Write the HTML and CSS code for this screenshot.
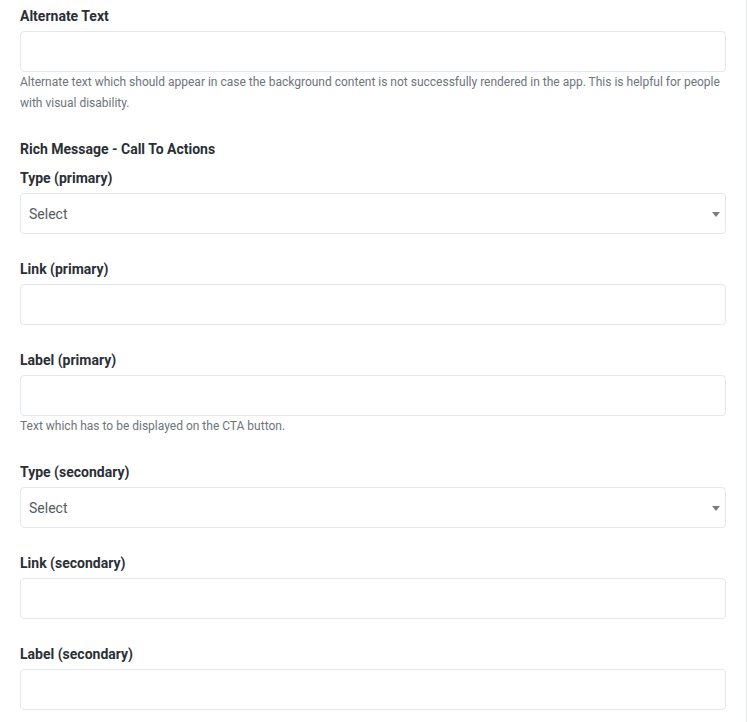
FILE: index.html
```html
<!DOCTYPE html>
<html lang="en">
<head>
<meta charset="utf-8">
<title>Rich Message</title>
<link rel="stylesheet" href="styles.css">
</head>
<body>
<div class="panel">
  <div class="group">
    <label class="label">Alternate Text</label>
    <div class="input"></div>
    <p class="help">Alternate text which should appear in case the background content is not successfully rendered in the app. This is helpful for people with visual disability.</p>
  </div>

  <h4 class="section">Rich Message - Call To Actions</h4>

  <div class="group">
    <label class="label">Type (primary)</label>
    <div class="input select"><span class="placeholder">Select</span><span class="caret"></span></div>
  </div>

  <div class="group">
    <label class="label">Link (primary)</label>
    <div class="input"></div>
  </div>

  <div class="group">
    <label class="label">Label (primary)</label>
    <div class="input"></div>
    <p class="help">Text which has to be displayed on the CTA button.</p>
  </div>

  <div class="group">
    <label class="label">Type (secondary)</label>
    <div class="input select"><span class="placeholder">Select</span><span class="caret"></span></div>
  </div>

  <div class="group">
    <label class="label">Link (secondary)</label>
    <div class="input"></div>
  </div>

  <div class="group">
    <label class="label">Label (secondary)</label>
    <div class="input"></div>
  </div>
</div>
</body>
</html>
```

FILE: styles.css
```css
html, body {
  margin: 0;
  padding: 0;
  background: #ffffff;
}

body {
  font-family: Roboto, "Liberation Sans", sans-serif;
  color: #2b2f36;
}

.panel {
  box-sizing: border-box;
  width: 747px;
  min-height: 722px;
  padding: 6px 20px 0 20px;
  border-right: 1px solid #e6eaf2;
}

.group {
  margin-bottom: 25px;
}

.label {
  display: block;
  font-size: 14px;
  font-weight: 700;
  line-height: 20px;
  margin-bottom: 5px;
  color: #2b2f36;
}

.section {
  margin: 0 0 9px 0;
  font-size: 14px;
  font-weight: 700;
  line-height: 20px;
  color: #2b2f36;
}

.input {
  box-sizing: border-box;
  height: 41px;
  border: 1px solid #e3e7ef;
  border-radius: 4px;
  background: #fff;
}

.select {
  display: flex;
  align-items: center;
  justify-content: space-between;
  padding: 0 5px 0 8px;
}

.placeholder {
  font-size: 14px;
  color: #555a60;
}

.caret {
  width: 0;
  height: 0;
  border-left: 4px solid transparent;
  border-right: 4px solid transparent;
  border-top: 5px solid #7a7d82;
  margin-top: 2px;
}

.help {
  margin: 0;
  font-size: 12px;
  line-height: 21px;
  color: #6e747c;
}
```
